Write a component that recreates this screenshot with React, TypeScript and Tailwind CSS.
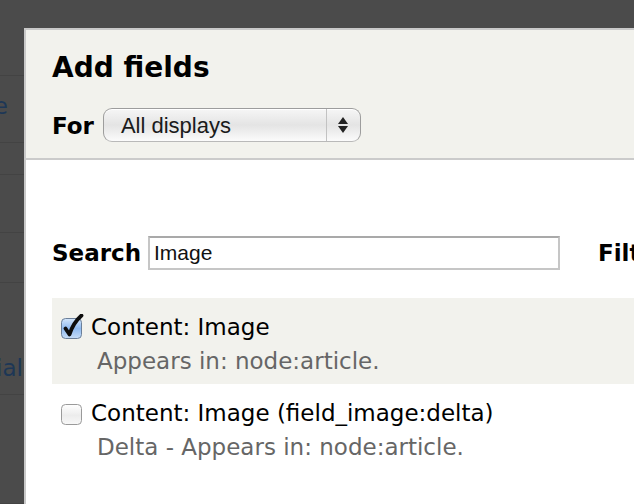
import React from "react";

const sans = "font-['DejaVu_Sans','Verdana',sans-serif]";
const helv = "font-['Liberation_Sans','Arial',sans-serif]";

const CheckedBox: React.FC = () => (
  <svg width="24" height="26" viewBox="0 0 24 26" className="shrink-0">
    <defs>
      <linearGradient id="cbBlue" x1="0" y1="0" x2="0" y2="1">
        <stop offset="0" stopColor="#d4e6fb" />
        <stop offset="0.5" stopColor="#8fbaf0" />
        <stop offset="1" stopColor="#c6ddf8" />
      </linearGradient>
    </defs>
    <rect x="1.5" y="4.5" width="20" height="20" rx="4" fill="url(#cbBlue)" stroke="#6b7f99" />
    <path d="M5.5 14.5 L9.5 20.5 Q13 9 21.5 1.5" fill="none" stroke="#0d0d0d" strokeWidth="3.8" strokeLinecap="round" strokeLinejoin="round" />
  </svg>
);

const EmptyBox: React.FC = () => (
  <svg width="24" height="26" viewBox="0 0 24 26" className="shrink-0">
    <defs>
      <linearGradient id="cbGray" x1="0" y1="0" x2="0" y2="1">
        <stop offset="0" stopColor="#ffffff" />
        <stop offset="0.55" stopColor="#ececec" />
        <stop offset="1" stopColor="#f8f8f8" />
      </linearGradient>
    </defs>
    <rect x="1.5" y="4.5" width="20" height="20" rx="4" fill="url(#cbGray)" stroke="#9a9a9a" />
  </svg>
);

const FieldRow: React.FC<{ checked?: boolean; title: string; desc: string }> = ({ checked, title, desc }) => (
  <div className={`pt-[13px] pb-[6px] pl-[8px] ${checked ? "bg-[#f2f2ed]" : "bg-white"}`}>
    <div className="flex items-center gap-[7px] h-[32px]">
      {checked ? <CheckedBox /> : <EmptyBox />}
      <span className="text-[23px] leading-[32px] text-black whitespace-nowrap">{title}</span>
    </div>
    <div className="mt-[2px] pl-[37px] text-[23px] leading-[33px] text-[#666666] whitespace-nowrap">{desc}</div>
  </div>
);

const App: React.FC = () => {
  // stripes of the page that lies under the overlay
  const under = [
    { h: 76, text: "", pr: 0 },
    { h: 67, text: "Manage", pr: 16 },
    { h: 32, text: "", pr: 0 },
    { h: 58, text: "", pr: 0 },
    { h: 50, text: "", pr: 0 },
    { h: 112, text: "Tutorial", pr: 1 },
    { h: 109, text: "", pr: 0 },
  ];

  return (
    <div className={`w-[634px] h-[504px] overflow-hidden bg-[#4b4b4b] flex ${sans}`}>
      <div className="w-[24px] shrink-0 flex flex-col">
        {under.map((u, i) => (
          <div
            key={i}
            style={{ height: u.h, paddingRight: u.pr }}
            className="border-b border-[#434343] overflow-hidden flex justify-end items-end text-[23px] leading-[32px] text-[#1d3756] whitespace-nowrap"
          >
            {u.text && <span className={i === 1 ? "mb-[20px]" : "mb-[10px]"}>{u.text}</span>}
          </div>
        ))}
      </div>

      <div className="flex-1 mt-[28px] border-l-2 border-t-2 border-[#c9c9c9] bg-white flex flex-col min-w-0">
        <div className="bg-[#f2f2ed] border-b-2 border-[#cbcbcb] pl-[26px] pt-[22px] pb-[16px]">
          <h1 className="text-[28px] leading-[32px] font-bold text-black whitespace-nowrap">Add fields</h1>
          <div className="mt-[24px] flex items-center gap-[9px]">
            <span className="text-[23px] leading-[28px] font-bold text-black pt-[2px]">For</span>
            <div className="w-[258px] h-[34px] rounded-[9px] border border-[#9d9d9d] border-b-[#b9b9b9] bg-gradient-to-b from-[#f6f6f6] via-[#e4e4e4] to-[#fbfbfb] shadow-[inset_0_1px_0_#ffffff] flex items-stretch">
              <div className={`flex-1 pl-[17px] flex items-center text-[22px] text-[#1a1a1a] ${helv}`}>All displays</div>
              <div className="w-[34px] border-l border-[#c2c2c2] flex flex-col items-center justify-center gap-[2px]">
                <svg width="10" height="7" viewBox="0 0 10 7"><path d="M5 0 L10 7 L0 7 Z" fill="#222" /></svg>
                <svg width="10" height="7" viewBox="0 0 10 7"><path d="M0 0 L10 0 L5 7 Z" fill="#222" /></svg>
              </div>
            </div>
          </div>
        </div>

        <div className="pl-[26px] pt-[76px]">
          <div className="flex items-center h-[34px]">
            <span className="text-[23px] leading-[28px] font-bold text-black w-[96px] shrink-0">Search</span>
            <div className={`w-[412px] h-[34px] shrink-0 border-2 border-[#c6c6c6] border-t-[#a9a9a9] bg-white pl-[4px] flex items-center text-[21px] text-[#111] ${helv}`}>
              Image
            </div>
            <span className="ml-[38px] text-[23px] leading-[28px] font-bold text-black whitespace-nowrap">Filter</span>
          </div>

          <div className="mt-[28px]">
            <FieldRow checked title="Content: Image" desc="Appears in: node:article." />
            <FieldRow title="Content: Image (field_image:delta)" desc="Delta - Appears in: node:article." />
          </div>
        </div>
      </div>
    </div>
  );
};

export default App;
